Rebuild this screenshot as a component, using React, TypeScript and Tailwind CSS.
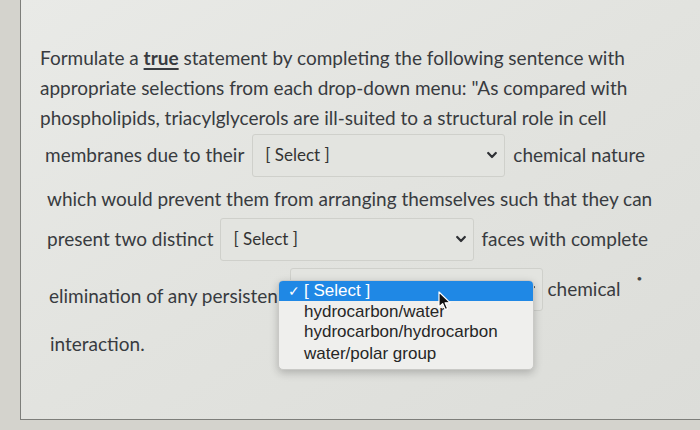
import React from "react";

const textFont = { fontFamily: "Lato, 'Open Sans', sans-serif" };

function Chevron() {
  return (
    <svg width="10" height="8" viewBox="0 0 10 8" className="shrink-0">
      <path d="M1.2 2 L5 6 L8.8 2" fill="none" stroke="#2f3135" strokeWidth="2.2" strokeLinecap="round" strokeLinejoin="round" />
    </svg>
  );
}

function SelectBox({ width, children }: { width: string; children?: React.ReactNode }) {
  return (
    <div
      className={`${width} h-[43px] shrink-0 flex items-center justify-between pl-[12px] pr-[7px] border border-[#cfd0cb] rounded-[3px] bg-[#e3e4e0]`}
    >
      {children}
    </div>
  );
}

function Cursor() {
  return (
    <svg width="14" height="21" viewBox="0 0 14 21" className="absolute left-[159px] top-[10px]">
      <path d="M1 1 L1 16 L4.6 12.6 L7.2 18.6 L9.6 17.6 L7.1 11.8 L12 11.6 Z" fill="#111" stroke="#fff" strokeWidth="1.2" strokeLinejoin="round" />
    </svg>
  );
}

export default function App() {
  return (
    <div
      className="w-[700px] h-[430px] overflow-hidden flex bg-[#d4d3cd] text-[19px] text-[#383b3f]"
      style={textFont}
    >
      <div className="relative ml-[20px] flex-1 h-[420px] border-l-[1.5px] border-b-[1.5px] border-[#7d7e7a] bg-gradient-to-br from-[#e9eae7] via-[#e2e3df] to-[#dcddd9]">
        <div className="pt-[43px] flex flex-col whitespace-nowrap">
          <div className="h-[30px] flex items-center pl-[19px]">
            <span>
              Formulate a{" "}
              <span className="font-bold underline underline-offset-[3px] decoration-[1.5px]">true</span>{" "}
              statement by completing the following sentence with
            </span>
          </div>
          <div className="h-[30px] flex items-center pl-[19px]">
            appropriate selections from each drop-down menu: "As compared with
          </div>
          <div className="h-[30px] flex items-center pl-[19px]">
            phospholipids, triacylglycerols are ill-suited to a structural role in cell
          </div>

          <div className="h-[44px] flex items-center gap-[8px] pl-[24px]">
            <span>membranes due to their</span>
            <SelectBox width="w-[253px]">
              <span className="text-[17px] text-[#333]">[ Select ]</span>
              <Chevron />
            </SelectBox>
            <span>chemical nature</span>
          </div>

          <div className="h-[30px] mt-[7px] flex items-center pl-[26px]">
            which would prevent them from arranging themselves such that they can
          </div>

          <div className="h-[44px] mt-[3px] flex items-center gap-[7px] pl-[26px]">
            <span>present two distinct</span>
            <SelectBox width="w-[254px]">
              <span className="text-[17px] text-[#333]">[ Select ]</span>
              <Chevron />
            </SelectBox>
            <span>faces with complete</span>
          </div>

          <div className="h-[44px] mt-[6px] flex items-center gap-[5px] pl-[28px]">
            <span className="translate-y-[7px]">elimination of any persistent</span>
            <SelectBox width="w-[253px]">
              <span />
              <Chevron />
            </SelectBox>
            <span className="flex items-start gap-[16px]">
              chemical
              <span className="text-[10px] leading-none mt-[-2px] text-[#444]">•</span>
            </span>
          </div>

          <div className="h-[30px] mt-[18px] flex items-center pl-[29px]">interaction.</div>
        </div>

        {/* open option list of the third drop-down */}
        <div
          className="absolute left-[257px] top-[280px] w-[256px] pb-[5px] bg-[#efefed] rounded-[5px] border border-[#c9c9c6] shadow-[0_3px_8px_rgba(0,0,0,0.22)] text-[17px] text-[#262626] leading-[20px] whitespace-nowrap"
          style={{ fontFamily: "'Liberation Sans', Arial, sans-serif" }}
        >
          <div className="relative h-[20px] flex items-center bg-[#1f88e5] text-white rounded-t-[4px]">
            <span className="w-[25px] pl-[9px] text-[14px]">✓</span>
            <span>[ Select ]</span>
            <Cursor />
          </div>
          <div className="pl-[25px] mt-[1px]">hydrocarbon/water</div>
          <div className="pl-[25px]">hydrocarbon/hydrocarbon</div>
          <div className="pl-[25px] mt-[2px]">water/polar group</div>
        </div>
      </div>
    </div>
  );
}
